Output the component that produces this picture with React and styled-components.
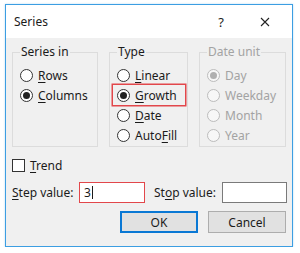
import React from 'react';
import styled, { createGlobalStyle } from 'styled-components';

const Ink = '#1b1b1b';
const Muted = '#a3a3a3';
const Alert = '#e2474b';

const Global = createGlobalStyle`
  html, body {
    margin: 0;
    padding: 0;
    background: #fff;
  }
  body {
    font-family: "Noto Sans", "Open Sans", sans-serif;
    font-size: 12px;
    color: ${Ink};
  }
`;

const Dialog = styled.div`
  box-sizing: border-box;
  width: 288px;
  height: 243px;
  margin: 4px 0 0 5px;
  border: 1px solid #3c9ee2;
  background: #f0f0f0;
  display: flex;
  flex-direction: column;
  box-shadow: 0 0 2px rgba(60, 158, 226, 0.35);
`;

const TitleBar = styled.div`
  height: 33px;
  flex: none;
  background: #fff;
  display: flex;
  align-items: center;
  padding-left: 8px;
`;

const Title = styled.div`
  flex: 1;
  font-size: 12px;
  margin-top: -1px;
`;

const TitleButton = styled.div`
  width: 22px;
  height: 22px;
  display: flex;
  align-items: center;
  justify-content: center;
  margin-right: ${p => p.$right || 0}px;
  font-size: 13px;
`;

const Body = styled.div`
  flex: 1;
  padding: 7px 6px 0 6px;
  display: flex;
  flex-direction: column;
`;

const Groups = styled.div`
  display: grid;
  grid-template-columns: 86px 79px 87px;
  column-gap: 11px;
`;

const Group = styled.fieldset`
  margin: 0;
  padding: 6px 0 1px 3px;
  min-width: 0;
  border: 1px solid #dcdcdc;
  border-radius: 0;
  display: flex;
  flex-direction: column;
  align-items: flex-start;
`;

const Legend = styled.legend`
  margin-left: 4px;
  padding: 0 1px;
  line-height: 14px;
  color: ${p => (p.$disabled ? Muted : Ink)};
`;

const Option = styled.div`
  height: 20px;
  box-sizing: border-box;
  display: inline-flex;
  align-items: center;
  gap: 5px;
  padding: 0 8px 0 4px;
  color: ${p => (p.$disabled ? Muted : Ink)};
  box-shadow: ${p => (p.$marked ? `0 0 0 1.5px ${Alert}` : 'none')};
`;

const Dot = styled.span`
  box-sizing: border-box;
  width: 13px;
  height: 13px;
  border-radius: 50%;
  border: 1px solid ${p => (p.$disabled ? '#bcbcbc' : '#333')};
  background: ${p => (p.$disabled ? '#f7f7f7' : '#fff')};
  display: flex;
  align-items: center;
  justify-content: center;
  flex: none;

  &::after {
    content: '';
    width: 7px;
    height: 7px;
    border-radius: 50%;
    background: ${p => (p.$disabled ? '#b0b0b0' : '#222')};
    display: ${p => (p.$checked ? 'block' : 'none')};
  }
`;

const Key = styled.span`
  text-decoration: underline;
  text-underline-offset: 2px;
  text-decoration-thickness: 1px;
`;

const CheckRow = styled.label`
  display: flex;
  align-items: center;
  gap: 5px;
  margin-top: 12px;
  height: 13px;
`;

const Box = styled.span`
  box-sizing: border-box;
  width: 13px;
  height: 13px;
  border: 1px solid #333;
  background: #fff;
  flex: none;
`;

const ValueRow = styled.div`
  display: grid;
  grid-template-columns: 67px 66px 77px 65px;
  align-items: center;
  margin-top: 10px;
`;

const FieldLabel = styled.span`
  white-space: nowrap;
  padding-left: ${p => p.$indent || 0}px;
`;

const Field = styled.div`
  box-sizing: border-box;
  height: 21px;
  background: #fff;
  border: ${p => (p.$marked ? `1.5px solid ${Alert}` : '1px solid #7a7a7a')};
  display: flex;
  align-items: center;
  padding-left: 4px;
`;

const Caret = styled.span`
  width: 1px;
  height: 13px;
  background: ${Ink};
  margin-left: 1px;
`;

const Buttons = styled.div`
  display: flex;
  justify-content: flex-end;
  gap: 10px;
  margin-top: 8px;
`;

const Button = styled.div`
  box-sizing: border-box;
  width: 78px;
  height: 22px;
  display: flex;
  align-items: center;
  justify-content: center;
  background: #e1e1e1;
  border: ${p => (p.$primary ? '2px solid #0a78d4' : '1px solid #adadad')};
`;

function Radio({ label, keyIndex = 0, checked, disabled, marked }) {
  const before = label.slice(0, keyIndex);
  const key = label.charAt(keyIndex);
  const after = label.slice(keyIndex + 1);
  return (
    <Option $disabled={disabled} $marked={marked}>
      <Dot $checked={checked} $disabled={disabled} />
      <span>
        {disabled ? label : <>{before}<Key>{key}</Key>{after}</>}
      </span>
    </Option>
  );
}

export default function App() {
  return (
    <>
      <Global />
      <Dialog>
        <TitleBar>
          <Title>Series</Title>
          <TitleButton $right={22}>?</TitleButton>
          <TitleButton $right={16}>
            <svg width="10" height="10" viewBox="0 0 10 10">
              <path d="M1 1L9 9M9 1L1 9" stroke="#222" strokeWidth="1.1" fill="none" />
            </svg>
          </TitleButton>
        </TitleBar>
        <Body>
          <Groups>
            <Group>
              <Legend>Series in</Legend>
              <Radio label="Rows" />
              <Radio label="Columns" checked />
            </Group>
            <Group>
              <Legend>Type</Legend>
              <Radio label="Linear" />
              <Radio label="Growth" checked marked />
              <Radio label="Date" />
              <Radio label="AutoFill" keyIndex={4} />
            </Group>
            <Group>
              <Legend $disabled>Date unit</Legend>
              <Radio label="Day" checked disabled />
              <Radio label="Weekday" disabled />
              <Radio label="Month" disabled />
              <Radio label="Year" disabled />
            </Group>
          </Groups>
          <CheckRow>
            <Box />
            <span><Key>T</Key>rend</span>
          </CheckRow>
          <ValueRow>
            <FieldLabel><Key>S</Key>tep value:</FieldLabel>
            <Field $marked>3<Caret /></Field>
            <FieldLabel $indent={9}>St<Key>o</Key>p value:</FieldLabel>
            <Field />
          </ValueRow>
          <Buttons>
            <Button $primary>OK</Button>
            <Button>Cancel</Button>
          </Buttons>
        </Body>
      </Dialog>
    </>
  );
}
